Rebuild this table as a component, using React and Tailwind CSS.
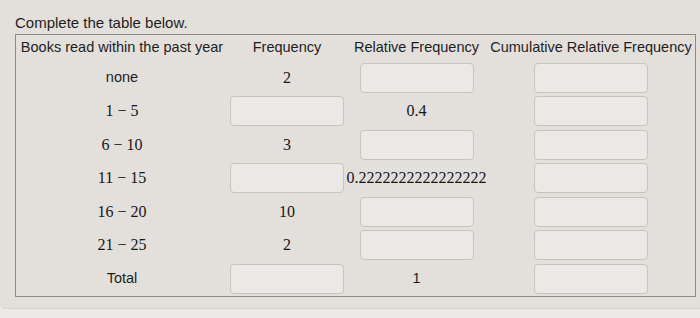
import React from "react";

const sans = { fontFamily: '"Liberation Sans", Arial, sans-serif' };
const serif = { fontFamily: '"Liberation Serif", "Times New Roman", serif' };

function Box() {
  return (
    <div className="h-[30px] w-[114px] rounded-[4px] border border-[#c6c3bd] bg-[#ebe9e5]" />
  );
}

function Num({ children }) {
  return (
    <span className="text-[16px] text-[#161616] whitespace-nowrap" style={serif}>
      {children}
    </span>
  );
}

function Word({ children }) {
  return (
    <span className="text-[14.5px] text-[#1e1e1e] whitespace-nowrap" style={sans}>
      {children}
    </span>
  );
}

const rows = [
  [<Word>none</Word>, <Num>2</Num>, <Box />, <Box />],
  [<Num>1 − 5</Num>, <Box />, <Num>0.4</Num>, <Box />],
  [<Num>6 − 10</Num>, <Num>3</Num>, <Box />, <Box />],
  [<Num>11 − 15</Num>, <Box />, <Num>0.2222222222222222</Num>, <Box />],
  [<Num>16 − 20</Num>, <Num>10</Num>, <Box />, <Box />],
  [<Num>21 − 25</Num>, <Num>2</Num>, <Box />, <Box />],
  [<Word>Total</Word>, <Box />, <Word>1</Word>, <Box />],
];

const headers = [
  "Books read within the past year",
  "Frequency",
  "Relative Frequency",
  "Cumulative Relative Frequency",
];

export default function App() {
  return (
    <div className="w-[700px] h-[318px] bg-[#ebe9e5] overflow-hidden">
      <div className="h-[309px] bg-[#e3e0db] rounded-bl-[6px] border-b border-[#d6d3cd] pl-[15px] pt-[13px]">
        <div className="text-[15px] leading-[20px] text-[#1e1e1e]" style={sans}>
          Complete the table below.
        </div>
        <div className="mt-[1px] w-[681px] border border-[#8e8b86]">
          <div className="grid grid-cols-[212px_118px_141px_208px] h-[26px] items-center">
            {headers.map((h) => (
              <div key={h} className="flex justify-center">
                <span className="text-[14.5px] text-[#1e1e1e] whitespace-nowrap" style={sans}>
                  {h}
                </span>
              </div>
            ))}
          </div>
          {rows.map((r, i) => (
            <div
              key={i}
              className="grid grid-cols-[212px_118px_141px_208px] h-[33.5px] items-center"
            >
              {r.map((c, j) => (
                <div key={j} className="flex justify-center items-center">
                  {c}
                </div>
              ))}
            </div>
          ))}
        </div>
      </div>
    </div>
  );
}
